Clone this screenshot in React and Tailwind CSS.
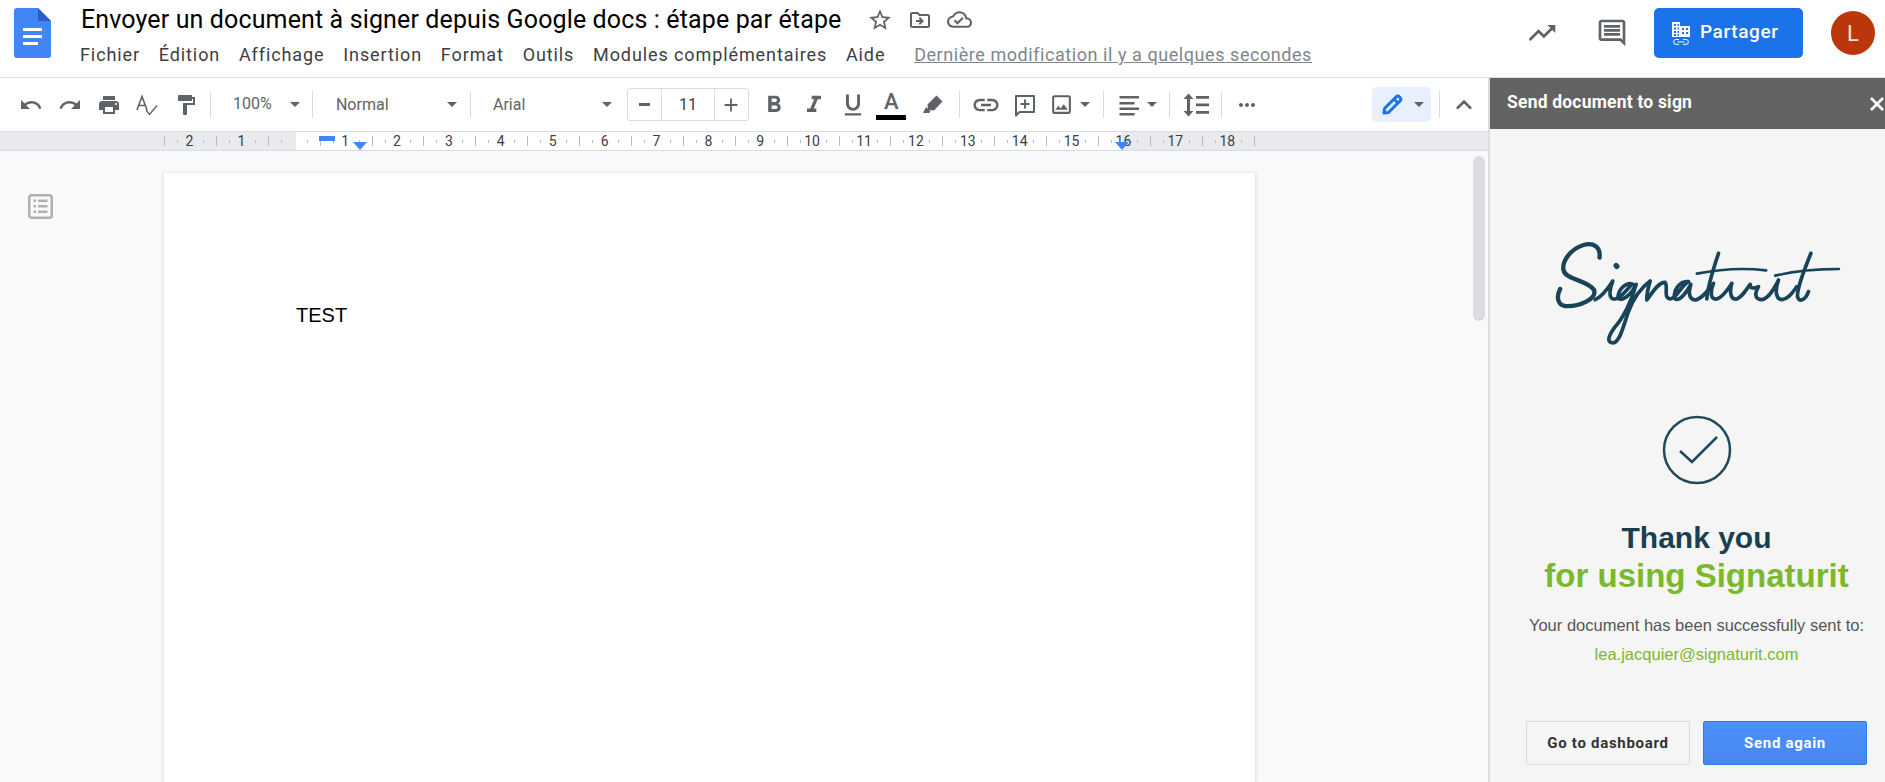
import React from 'react';
import {
  MdUndo, MdRedo, MdPrint, MdFormatPaint, MdFormatBold, MdFormatItalic, MdFormatUnderlined,
  MdInsertLink, MdOutlineImage, MdMoreHoriz, MdExpandLess, MdStarBorder, MdOutlineDriveFileMove,
  MdOutlineCloudDone, MdTrendingUp, MdOutlineComment, MdAdd,
} from 'react-icons/md';

const menus = ['Fichier', 'Édition', 'Affichage', 'Insertion', 'Format', 'Outils', 'Modules complémentaires', 'Aide'];
const rulerLabels = ['2', '1', '', '1', '2', '3', '4', '5', '6', '7', '8', '9', '10', '11', '12', '13', '14', '15', '16', '17', '18'];

const Sep = ({ className = '' }) => <div className={`w-px h-[27px] bg-[#dadce0] shrink-0 ${className}`} />;

const Caret = ({ className = '' }) => (
  <span className={`w-0 h-0 border-x-[5px] border-x-transparent border-t-[5px] border-t-[#5f6368] shrink-0 ${className}`} />
);

const Tool = ({ icon: Icon, size = 24, className = '' }) => (
  <div className={`w-[38.7px] h-full flex items-center justify-center text-[#5f6368] shrink-0 ${className}`}>
    <Icon style={{ width: size, height: size }} />
  </div>
);

const Spell = () => (
  <svg viewBox="0 0 24 24" fill="none" stroke="currentColor" strokeWidth="1.6" className="w-[24px] h-[24px]">
    <path d="M2 17 L7 3.5 L12 17 M4 12.5 H10.5" />
    <path d="M11 17 L14.5 21.5 L22 12.5" strokeWidth="1.4" />
  </svg>
);

const Highlighter = () => (
  <svg viewBox="0 0 24 24" fill="#5f6368" className="w-[24px] h-[24px]">
    <path d="M15.5 2.5 L21.5 8.5 L13 17.5 L7 17 L6.5 11.5 Z" />
    <path d="M5 14 L9.5 18.5 L8 20 L2 20 Z" />
  </svg>
);

const AddComment = () => (
  <svg viewBox="0 0 24 24" fill="none" stroke="#5f6368" strokeWidth="2" className="w-[24px] h-[24px]">
    <path d="M3 3 H21 V19 H6.5 L3 22.5 Z" strokeLinejoin="round" />
    <path d="M12 6.5 V15.5 M7.5 11 H16.5" />
  </svg>
);

const AlignLeft = () => (
  <svg viewBox="0 0 24 24" fill="#5f6368" className="w-[24px] h-[24px]">
    <path d="M2.5 3 H22 V5.5 H2.5 Z M2.5 9 H17.5 V11.5 H2.5 Z M2.5 14.5 H22 V17 H2.5 Z M2.5 20 H17.5 V22.5 H2.5 Z" />
  </svg>
);

const LineSpacing = () => (
  <svg viewBox="0 0 28 24" fill="#5f6368" className="w-[28px] h-[24px]">
    <path d="M6.5 0.5 L11.5 6 H8 V18 H11.5 L6.5 23.5 L1.5 18 H5 V6 H1.5 Z" />
    <path d="M14 3 H27 V5.8 H14 Z M14 10.5 H27 V13.3 H14 Z M14 18 H27 V20.8 H14 Z" />
  </svg>
);

const Pencil = () => (
  <svg viewBox="0 0 24 24" fill="none" stroke="#1a73e8" strokeWidth="3" strokeLinejoin="round" className="w-[24px] h-[24px]">
    <path d="M4 20 L4.5 15.5 L16 4 C17 3 18.5 3 19.5 4 L20 4.5 C21 5.5 21 7 20 8 L8.5 19.5 Z" />
    <path d="M14 6 L18 10" />
  </svg>
);

const DocsLogo = () => (
  <svg viewBox="0 0 37 50" className="w-[37px] h-[50px]">
    <path d="M3 0 H24 L37 13 V47 A3 3 0 0 1 34 50 H3 A3 3 0 0 1 0 47 V3 A3 3 0 0 1 3 0 Z" fill="#4285f4" />
    <path d="M24 0 L37 13 H24 Z" fill="#2a5fc9" />
    <path d="M9 20 H28 V23 H9 Z M9 27 H28 V30 H9 Z M9 34 H24 V37 H9 Z" fill="#fff" />
  </svg>
);

const ShareIcon = () => (
  <svg viewBox="0 0 18 23" className="w-[18px] h-[23px]" fill="#fff">
    <path fillRule="evenodd" d="M0 0 H8 V4 H18 V15 H0 Z M2 2 V4 H4 V2 Z M5.5 2 V4 H7 V2 Z M2 5.5 V7.5 H4 V5.5 Z M5.5 5.5 V7.5 H7 V5.5 Z M2 9 V11 H4 V9 Z M5.5 9 V11 H7 V9 Z M2 12 V14 H4 V12 Z M5.5 12 V14 H7 V12 Z M10 6 V8 H12 V6 Z M14 6 V8 H16 V6 Z M10 10 V12 H12 V10 Z M14 10 V12 H16 V10 Z" />
    <path d="M7 17.5 H4 A2.4 2.4 0 0 0 4 22.3 H7 M11 17.5 H14 A2.4 2.4 0 0 1 14 22.3 H11 M5.5 19.9 H12.5" fill="none" stroke="#fff" strokeWidth="1" />
  </svg>
);

const OutlineIcon = () => (
  <svg viewBox="0 0 25 25" className="w-[25px] h-[25px]" fill="none">
    <rect x="1.25" y="1.25" width="22.5" height="22.5" rx="2.5" stroke="#b0b0b0" strokeWidth="2.5" />
    <path d="M5.5 5.5 H8 V8 H5.5 Z M10 5.5 H19.5 V8 H10 Z M5.5 11 H8 V13.5 H5.5 Z M10 11 H19.5 V13.5 H10 Z M5.5 16.5 H8 V19 H5.5 Z M10 16.5 H19.5 V19 H10 Z" fill="#b0b0b0" />
  </svg>
);

// hand traced from the logo
const SignaturitLogo = () => (
  <svg viewBox="225 88 860 312" className="w-[287px] h-[104px]" fill="none" stroke="#174458" strokeWidth="11" strokeLinecap="round" strokeLinejoin="round">
    <path d="M358 138 C362 105 340 92 310 100 C270 112 245 150 250 175 C256 205 322 205 342 235 C350 262 300 285 255 283 C232 280 228 255 240 232" strokeWidth="13" />
    <path d="M345 264 C368 254 385 228 398 208 C386 240 385 264 405 262 C425 258 440 232 452 222" />
    <path d="M408 162 L410 164" strokeWidth="16" />
    <path d="M465 222 C445 205 418 228 414 252 C412 272 440 262 458 235 L468 218 C455 268 428 320 405 345 C385 372 378 392 398 394 C420 392 430 340 445 300 C458 265 480 230 510 208 C505 225 498 250 500 265 C515 245 535 210 555 212 C565 225 548 258 570 262 C590 260 600 225 625 210 C600 205 575 240 585 262 C600 268 620 240 632 218 C625 240 625 262 645 265 C665 262 685 235 700 215 C690 240 690 265 710 262 C730 255 745 230 755 215 C748 240 750 265 770 262 C785 255 795 240 810 218 C812 230 815 232 835 225 C825 240 820 262 845 264 C865 260 880 235 895 205 C885 235 885 262 905 264 C925 262 935 245 950 225" />
    <path d="M715 125 C700 170 682 225 680 262" />
    <path d="M650 186 C720 172 790 168 858 176" strokeWidth="8" />
    <path d="M992 125 C975 170 950 225 952 255 C955 272 975 268 985 240" />
    <path d="M885 192 C950 176 1020 172 1076 172" strokeWidth="8" />
  </svg>
);

const Ruler = () => (
  <div className="relative h-[20px] bg-[#e8eaed] border-y border-[#dadce0] shrink-0 overflow-hidden">
    <div className="absolute left-[296px] top-0 bottom-0 w-[826px] bg-white" />
    <div className="relative flex h-full pl-[164px]">
      {rulerLabels.map((label, i) => (
        <div key={i} className="w-[51.9px] shrink-0 flex items-center relative">
          <span className="w-px h-[10px] bg-[#b8babd] shrink-0" />
          <span className="w-px h-[3px] bg-[#b8babd] ml-[12px] shrink-0" />
          <span className="flex-1 text-center text-[14px] text-[#3c4043] leading-none -translate-x-[1px]">{label}</span>
          <span className="w-px h-[3px] bg-[#b8babd] mr-[12px] shrink-0" />
        </div>
      ))}
      <span className="w-px h-[10px] bg-[#b8babd] self-center" />
    </div>
    <div className="absolute left-[319px] top-[4px] w-[16px] h-[5px] bg-[#4285f4]" />
    <div className="absolute left-[353px] top-[10px] w-0 h-0 border-x-[7px] border-x-transparent border-t-[8px] border-t-[#4285f4]" />
    <div className="absolute left-[1115px] top-[10px] w-0 h-0 border-x-[7px] border-x-transparent border-t-[8px] border-t-[#4285f4]" />
  </div>
);

const Toolbar = () => (
  <div className="h-[53px] flex items-center pl-[12px] shrink-0 text-[16px] text-[#5f6368]">
    <Tool icon={MdUndo} />
    <Tool icon={MdRedo} />
    <Tool icon={MdPrint} />
    <Tool icon={Spell} />
    <Tool icon={MdFormatPaint} />
    <Sep className="ml-[4.5px]" />
    <div className="w-[101px] flex items-center justify-between pl-[22px] pr-[12px]">
      <span className="-mt-[2px]">100%</span><Caret />
    </div>
    <Sep />
    <div className="w-[157px] flex items-center justify-between pl-[23px] pr-[13px]">
      <span>Normal</span><Caret />
    </div>
    <Sep />
    <div className="w-[156px] flex items-center justify-between pl-[22px] pr-[15px]">
      <span>Arial</span><Caret />
    </div>
    <div className="w-[122px] h-[33px] flex items-center border border-[#dadce0] rounded-[3px] text-[#3c4043] shrink-0">
      <div className="w-[33px] flex justify-center"><span className="w-[11px] h-[3px] bg-[#5f6368]" /></div>
      <div className="flex-1 h-full flex items-center justify-center border-x border-[#dadce0]">11</div>
      <div className="w-[33px] flex justify-center text-[#5f6368]"><MdAdd className="w-[22px] h-[22px]" /></div>
    </div>
    <Tool icon={MdFormatBold} size={28} className="ml-[5.5px]" />
    <Tool icon={MdFormatItalic} size={28} className="ml-[2px]" />
    <Tool icon={MdFormatUnderlined} size={28} />
    <div className="w-[37.7px] h-full flex flex-col items-center justify-center shrink-0">
      <span className="text-[22px] leading-[24px] font-medium text-[#5f6368]">A</span>
      <span className="w-[30px] h-[5px] bg-black mt-[1px]" />
    </div>
    <Tool icon={Highlighter} className="ml-[3px]" />
    <Sep className="ml-[7px]" />
    <Tool icon={MdInsertLink} size={30} className="ml-[7px]" />
    <Tool icon={AddComment} />
    <div className="w-[50.9px] h-full flex items-center pl-[4.4px] text-[#5f6368] shrink-0">
      <MdOutlineImage className="w-[25px] h-[25px]" /><Caret className="ml-[6px]" />
    </div>
    <Sep className="ml-[8px]" />
    <div className="w-[65px] h-full flex items-center pl-[13px] text-[#5f6368] shrink-0">
      <AlignLeft /><Caret className="ml-[6px]" />
    </div>
    <Sep />
    <Tool icon={LineSpacing} size={28} className="w-[51px]" />
    <Sep />
    <Tool icon={MdMoreHoriz} size={24} className="ml-[6px]" />
    <div className="w-[59px] h-[35px] ml-[105px] rounded-[5px] bg-[#e8f0fe] flex items-center pl-[8px] shrink-0">
      <Pencil /><Caret className="ml-[10px] border-t-[#1a73e8]" />
    </div>
    <Sep className="ml-[8px]" />
    <Tool icon={MdExpandLess} size={32} className="ml-[5px]" />
  </div>
);

const Panel = () => (
  <div className="w-[395px] shrink-0 bg-[#f5f5f5] flex flex-col overflow-hidden">
    <div className="h-[51px] bg-[#636363] flex items-center justify-between pl-[17px] pr-[1px] text-white">
      <span className="text-[17.5px] tracking-[0.2px] font-bold -mt-[2px]">Send document to sign</span>
      <svg viewBox="0 0 14 14" className="w-[14px] h-[14px]" fill="none" stroke="currentColor" strokeWidth="2.6">
        <path d="M1 1 L13 13 M13 1 L1 13" />
      </svg>
    </div>
    <div className="flex flex-col items-center pl-[18px] font-['Liberation_Sans',Arial,sans-serif]">
      <div className="mt-[112px] ml-[4px]"><SignaturitLogo /></div>
      <svg viewBox="0 0 70 70" className="w-[70px] h-[70px] mt-[70px]" fill="none" stroke="#1f4a5a">
        <circle cx="35" cy="35" r="33" strokeWidth="2.5" />
        <path d="M18 36 L30 47 L55 22" strokeWidth="2.5" />
      </svg>
      <div className="mt-[34px] text-center font-bold text-[30px] leading-[38px]">
        <div className="text-[#193f50]">Thank you</div>
        <div className="text-[#7ab92a] text-[33px]">for using Signaturit</div>
      </div>
      <p className="mt-[19px] text-[16.5px] leading-[22px] text-[#555]">Your document has been successfully sent to:</p>
      <p className="mt-[7px] text-[16.5px] leading-[22px] text-[#7ab92a]">lea.jacquier@signaturit.com</p>
      <div className="mt-[56px] flex gap-[13px] font-['Roboto',sans-serif] font-bold text-[15px] tracking-[0.7px]">
        <button className="w-[164px] h-[44px] rounded-[2px] border border-[#dcdcdc] bg-[#f5f5f5] text-[#333]">Go to dashboard</button>
        <button className="w-[164px] h-[44px] rounded-[2px] border border-[#3079ed] bg-gradient-to-b from-[#4d90fe] to-[#4787ed] text-white">Send again</button>
      </div>
    </div>
  </div>
);

export default function App() {
  return (
    <div className="w-[1885px] h-[782px] overflow-hidden bg-white flex flex-col font-['Roboto',sans-serif]">
      <header className="h-[78px] shrink-0 flex items-start border-b border-[#dadce0] relative">
        <div className="pl-[14px] pt-[8px] w-[80px] shrink-0"><DocsLogo /></div>
        <div className="flex-1 min-w-0">
          <div className="flex items-center pt-[3px] h-[36px]">
            <h1 className="text-[25px] tracking-[0.13px] leading-[30px] text-black whitespace-nowrap pl-px">Envoyer un document à signer depuis Google docs : étape par étape</h1>
            <div className="flex items-center gap-[15px] ml-[26px] text-[#5f6368]">
              <MdStarBorder className="w-[26px] h-[26px]" />
              <MdOutlineDriveFileMove className="w-[24px] h-[24px]" />
              <MdOutlineCloudDone className="w-[25px] h-[25px]" />
            </div>
          </div>
          <nav className="flex items-center gap-[18.8px] mt-[7px] text-[18px] leading-[24px] tracking-[0.9px] text-[#3c4043]">
            {menus.map((m) => <span key={m} className="whitespace-nowrap">{m}</span>)}
            <span className="ml-[10px] underline tracking-[0.56px] text-[#80868b] whitespace-nowrap">Dernière modification il y a quelques secondes</span>
          </nav>
        </div>
        <div className="flex items-center pt-[8px] pr-[10px] shrink-0">
          <MdTrendingUp className="w-[32px] h-[32px] text-[#5f6368] mr-[38px]" />
          <MdOutlineComment className="w-[32px] h-[32px] text-[#5f6368] mr-[26px]" />
          <button className="w-[149px] h-[50px] rounded-[5px] bg-[#1a73e8] text-white flex items-center pl-[18px] gap-[10px] text-[19px] font-medium tracking-[0.6px]">
            <ShareIcon /><span className="-mt-[2px]">Partager</span>
          </button>
          <div className="w-[44px] h-[44px] rounded-full bg-[#bc360c] text-white/85 flex items-center justify-center text-[22px] ml-[28px]">L</div>
        </div>
      </header>
      <div className="flex-1 min-h-0 flex">
        <div className="w-[1490px] shrink-0 flex flex-col border-r-2 border-[#dadce0]">
          <Toolbar />
          <Ruler />
          <div className="flex-1 min-h-0 flex bg-[#f8f9fa] relative overflow-hidden">
            <div className="w-[164px] shrink-0 pl-[28px] pt-[43px]"><OutlineIcon /></div>
            <div className="w-[1091px] mt-[22px] bg-white shadow-[0_1px_3px_1px_rgba(60,64,67,0.15)] pt-[129px] pl-[132px]">
              <span className="text-[20px] leading-[26px] text-black font-['Liberation_Sans',Arial,sans-serif]">TEST</span>
            </div>
            <div className="absolute right-[3px] top-[5px] w-[12px] h-[165px] rounded-[6px] bg-[#dadce0]" />
          </div>
        </div>
        <Panel />
      </div>
    </div>
  );
}
